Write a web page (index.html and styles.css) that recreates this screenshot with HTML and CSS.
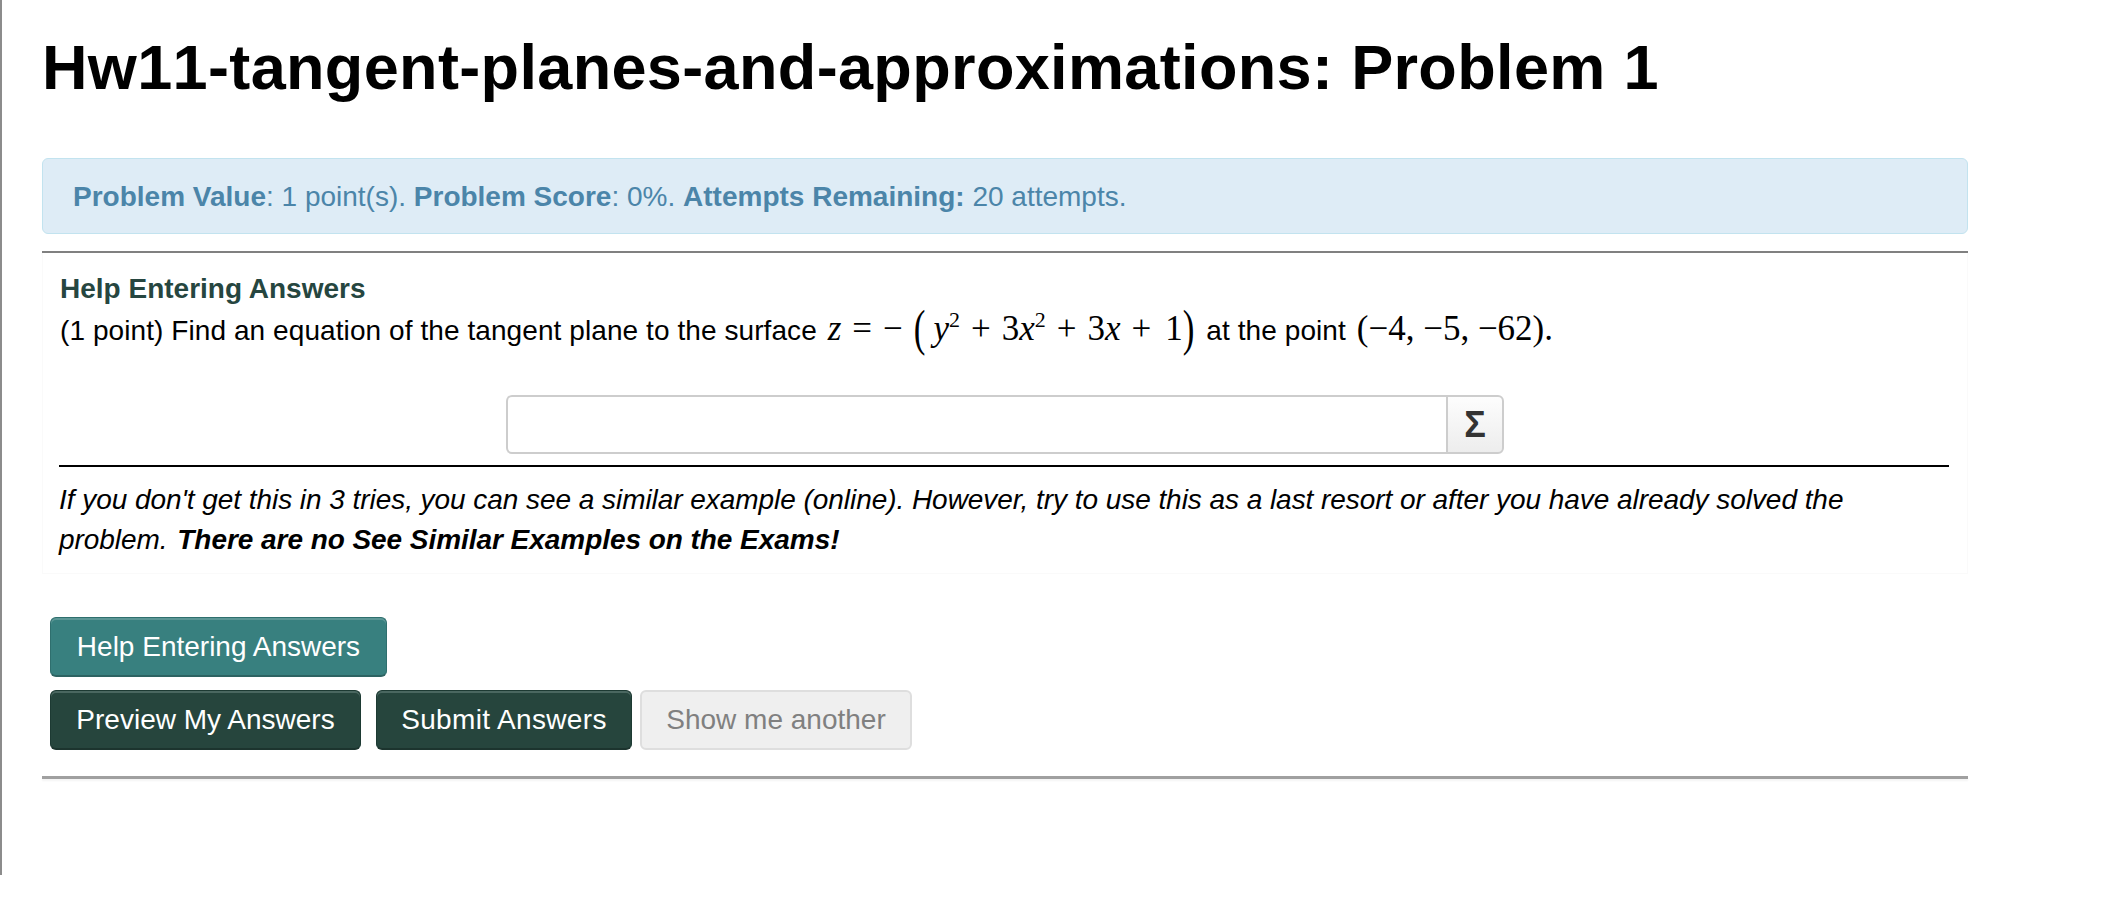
FILE: index.html
```html
<!DOCTYPE html>
<html lang="en">
<head>
<meta charset="utf-8">
<title>Hw11-tangent-planes-and-approximations: Problem 1</title>
<link rel="stylesheet" href="styles.css">
</head>
<body>
<main class="page">
  <h1 class="title">Hw11-tangent-planes-and-approximations: Problem 1</h1>
  <div class="alert"><b>Problem Value</b>: 1 point(s). <b>Problem Score</b>: 0%. <b>Attempts Remaining:</b> 20 attempts.</div>
  <hr class="rule">
  <section class="problem">
    <div class="help-link">Help Entering Answers</div>
    <p class="statement">(1 point) Find an equation of the tangent plane to the surface <span class="math surface"><i>z</i><span class="op">=</span><span class="neg">−</span><span class="paren open">(</span><i>y</i><sup>2</sup><span class="op">+</span>3<i>x</i><sup>2</sup><span class="op">+</span>3<i>x</i><span class="op last">+</span>1<span class="paren close">)</span></span> at the point <span class="math point">(−4, −5, −62).</span></p>
    <div class="answer">
      <div class="answer-input"></div>
      <div class="answer-btn"><span class="sigma">Σ</span></div>
    </div>
    <hr class="black-rule">
    <p class="note"><span class="note-line">If you don't get this in 3 tries, you can see a similar example (online). However, try to use this as a last resort or after you have already solved the</span><span class="note-line">problem. <b>There are no See Similar Examples on the Exams!</b></span></p>
  </section>
  <div class="actions">
    <div class="btn-row"><a class="btn teal">Help Entering Answers</a></div>
    <div class="btn-row">
      <a class="btn dark">Preview My Answers</a>
      <a class="btn dark submit">Submit Answers</a>
      <a class="btn off">Show me another</a>
    </div>
  </div>
  <hr class="rule bottom">
</main>
</body>
</html>
```
FILE: styles.css
```css
* { box-sizing: border-box; }
html, body { margin: 0; padding: 0; background: #fff; }
body { font-family: "Liberation Sans", Arial, sans-serif; color: #000; }
.page {
  width: 1970px;
  height: 875px;
  margin: 0;
  padding: 0 0 0 40px;
  border-left: 2px solid #8c8c8c;
  overflow: hidden;
}
.title {
  margin: 0;
  padding-top: 31px;
  height: 158px;
  font-size: 63px;
  line-height: 72px;
  font-weight: 700;
  font-kerning: none;
  letter-spacing: 0.35px;
  white-space: nowrap;
}
.alert {
  width: 1926px;
  height: 76px;
  padding: 1px 30px 0;
  background: #deecf6;
  border: 1px solid #c2e3ef;
  border-radius: 6px;
  color: #4b85a9;
  font-size: 28px;
  line-height: 74px;
}
.rule {
  width: 1926px;
  height: 2px;
  margin: 17px 0 0;
  border: 0;
  background: #808080;
  box-shadow: 0 2px 2px #f4f4f4;
}
.problem {
  width: 1926px;
  height: 321px;
  padding: 18px 17px 0;
  background: #fff;
  border: 1px solid #fafafa;
  border-top: 0;
}
.help-link {
  font-size: 28px;
  line-height: 36px;
  font-weight: 700;
  color: #264640;
}
.statement {
  margin: -1px 0 0;
  height: 58px;
  font-size: 28px;
  line-height: 46px;
  letter-spacing: 0.08px;
  white-space: nowrap;
}
.math { font-family: "Liberation Serif", serif; font-size: 35px; letter-spacing: 0; }
.math i { font-style: italic; }
.math sup { font-size: 22px; line-height: 0; vertical-align: 13px; }
.surface { margin-left: 3px; }
.point { margin-left: 3px; }
.op { margin: 0 11px; }
.op.last { margin-right: 14px; }
.neg { margin-right: 11px; }
.paren {
  display: inline-block;
  font-size: 35px;
  line-height: 30px;
  transform: scaleY(1.45);
}
.open { margin-right: 8px; }
.close { margin-right: 4px; }
.answer { display: flex; height: 60px; margin: 31px 0 0 446px; }
.answer-input {
  width: 940px;
  height: 59px;
  background: #fff;
  border: 2px solid #cdcdcd;
  border-right: 0;
  border-radius: 6px 0 0 6px;
}
.answer-btn {
  display: flex;
  align-items: center;
  justify-content: center;
  width: 58px;
  height: 59px;
  background: linear-gradient(#fdfdfd, #ededed);
  border: 2px solid #cdcdcd;
  border-radius: 0 6px 6px 0;
}
.sigma { font-size: 36px; font-weight: 700; color: #333; line-height: 1; }
.black-rule {
  width: 1890px;
  height: 2px;
  margin: 10px 0 0 -1px;
  border: 0;
  background: #000;
}
.note {
  margin: 13px 0 0 -1px;
  font-size: 28px;
  line-height: 40px;
  font-style: italic;
}
.note-line { display: block; letter-spacing: -0.05px; white-space: nowrap; }
.note-line b { margin-left: 2px; }
.actions { margin-top: 43px; padding-left: 8px; }
.btn-row { display: flex; gap: 8px; margin-bottom: 13px; }
.btn {
  display: inline-flex;
  align-items: center;
  justify-content: center;
  height: 60px;
  padding: 0 25px;
  font-size: 28px;
  border-radius: 6px;
  color: #fff;
  white-space: nowrap;
}
.teal {
  width: 337px;
  background: #38807f;
  border: 1px solid #2f6f6e;
  border-bottom: 2px solid #2d6362;
  box-shadow: inset 0 2px 0 #5c9796;
}
.dark {
  width: 311px;
  background: #26453d;
  border: 1px solid #1d3a33;
  border-bottom: 2px solid #1c342e;
  box-shadow: inset 0 2px 0 #4a6760;
}
.submit { width: 256px; margin-left: 7px; letter-spacing: 0.35px; }
.off {
  width: 272px;
  background: #efefef;
  border: 2px solid #dedede;
  color: #808080;
}
.bottom { margin-top: 26px; height: 3px; background: #a0a0a0; }
```
